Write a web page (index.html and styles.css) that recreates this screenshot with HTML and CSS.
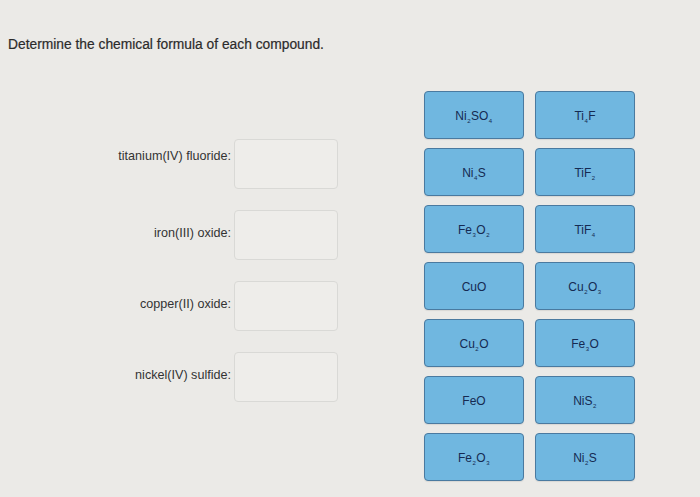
FILE: index.html
```html
<!DOCTYPE html>
<html>
<head>
<meta charset="utf-8">
<link rel="stylesheet" href="styles.css">
</head>
<body>
<div class="page">
  <p class="prompt">Determine the chemical formula of each compound.</p>
  <div class="main">
    <div class="targets">
      <div class="row"><span class="label high">titanium(IV) fluoride:</span><div class="drop"></div></div>
      <div class="row"><span class="label">iron(III) oxide:</span><div class="drop"></div></div>
      <div class="row"><span class="label">copper(II) oxide:</span><div class="drop"></div></div>
      <div class="row"><span class="label">nickel(IV) sulfide:</span><div class="drop"></div></div>
    </div>
    <div class="cards">
      <div class="card"><span class="f">Ni<sub>2</sub>SO<sub>4</sub></span></div>
      <div class="card"><span class="f">Ti<sub>4</sub>F</span></div>
      <div class="card"><span class="f">Ni<sub>4</sub>S</span></div>
      <div class="card"><span class="f">TiF<sub>2</sub></span></div>
      <div class="card"><span class="f">Fe<sub>3</sub>O<sub>2</sub></span></div>
      <div class="card"><span class="f">TiF<sub>4</sub></span></div>
      <div class="card"><span class="f">CuO</span></div>
      <div class="card"><span class="f">Cu<sub>2</sub>O<sub>3</sub></span></div>
      <div class="card"><span class="f">Cu<sub>2</sub>O</span></div>
      <div class="card"><span class="f">Fe<sub>3</sub>O</span></div>
      <div class="card"><span class="f">FeO</span></div>
      <div class="card"><span class="f">NiS<sub>2</sub></span></div>
      <div class="card"><span class="f">Fe<sub>2</sub>O<sub>3</sub></span></div>
      <div class="card"><span class="f">Ni<sub>2</sub>S</span></div>
    </div>
  </div>
</div>
</body>
</html>
```
FILE: styles.css
```css
html, body {
  margin: 0;
  padding: 0;
  background: #ebeae7;
}
.page {
  width: 700px;
  height: 497px;
  font-family: "Liberation Sans", Arial, sans-serif;
  color: #333;
}
.prompt {
  margin: 0;
  padding: 37px 0 0 8px;
  font-size: 13.8px;
  line-height: 16px;
  color: #2b2b2b;
  -webkit-text-stroke: 0.2px #2b2b2b;
}
.main {
  display: flex;
  padding-top: 38px;
}
.targets {
  display: flex;
  flex-direction: column;
  gap: 21px;
  margin-top: 48px;
  margin-left: 100px;
  width: 238px;
}
.row {
  display: flex;
  justify-content: flex-end;
  align-items: center;
  gap: 3px;
}
.label {
  font-size: 12.6px;
  color: #333;
  margin-top: -4px;
}
.label.high {
  margin-top: -16px;
}
.drop {
  width: 102px;
  height: 48px;
  border: 1px solid #d9d9d6;
  border-radius: 4px;
  background: #eeedea;
}
.cards {
  margin-left: 86px;
  display: grid;
  grid-template-columns: 100px 100px;
  grid-auto-rows: 48px;
  column-gap: 11px;
  row-gap: 9px;
}
.card {
  background: #70b7e0;
  border: 1px solid #4a7aa0;
  border-radius: 4px;
  display: flex;
  align-items: center;
  justify-content: center;
  box-shadow: 0 1px 1px rgba(0,0,0,0.08);
}
.f {
  font-size: 12px;
  line-height: 14px;
  color: #152a52;
  margin-top: 2px;
}
.f sub {
  font-size: 6px;
  line-height: 0;
  vertical-align: -3px;
  margin: 0 0.5px;
}
```
